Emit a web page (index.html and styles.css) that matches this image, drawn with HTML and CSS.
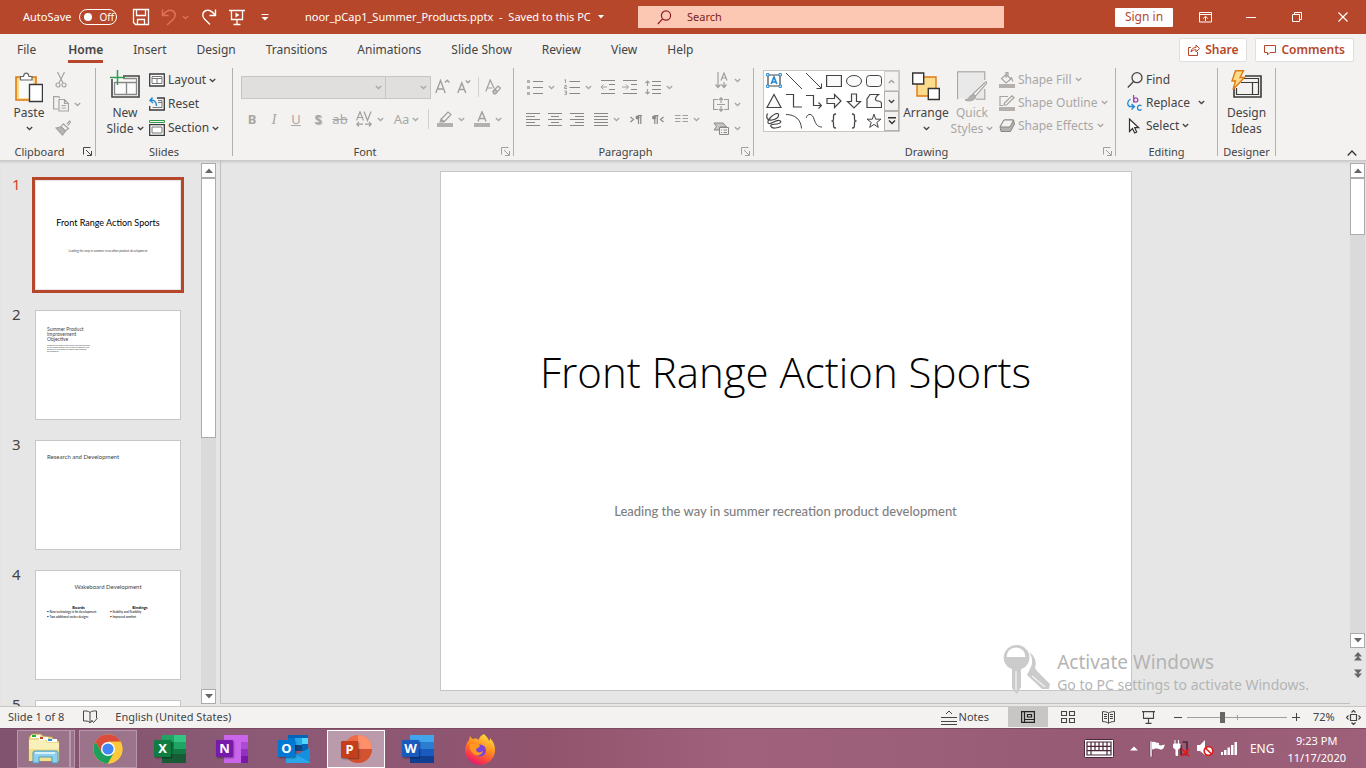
FILE: index.html
```html
<!DOCTYPE html>
<html lang="en">
<head>
  <meta charset="UTF-8">
  <title>noor_pCap1_Summer_Products.pptx</title>
  <link rel="stylesheet" href="styles.css">
</head>
<body>

  <!-- shared shapes -->
  <svg class="defs" width="0" height="0">
    <symbol id="chev" viewBox="0 0 7 5"><path d="M.8 1l2.700 2.500L6.200 1" fill="none" stroke="currentColor" stroke-width="1.300"/></symbol>
    <symbol id="launch" viewBox="0 0 9 9"><path d="M.5 7.500v-7h7M3 3l5 5M8.500 4v4.500H4" fill="none" stroke="currentColor"/></symbol>
    <symbol id="up" viewBox="0 0 8 5"><path d="M0 5l4-4.500L8 5z" fill="#666"/></symbol>
    <symbol id="down" viewBox="0 0 8 5"><path d="M0 0h8L4 4.500z" fill="#666"/></symbol>
  </svg>

  <!-- title bar -->
  <header class="titlebar">
    <div class="quick">
      <label class="autosave">AutoSave
        <span class="toggle"><input type="checkbox"><span>Off</span></span>
      </label>
      <button class="qbtn" aria-label="Save"><svg width="18" height="18" viewBox="0 0 18 18" fill="none" stroke="#fff" stroke-width="1.300"><path d="M1.500 1.500h15v15H3.500l-2-2zM4.500 1.500v6h9v-6M5.500 16.500v-5h7v5"/></svg></button>
      <button class="qbtn undo" aria-label="Undo"><svg width="16" height="18" viewBox="0 0 16 18" fill="none" stroke="#e0705a" stroke-width="1.600"><path d="M1.500 1.500v6h6M2 7C5 3 8 1.500 11 2.500c4 1.500 4 6 1.500 8.500L6 17"/></svg><svg class="chev" width="7" height="5"><use href="#chev"/></svg></button>
      <button class="qbtn" aria-label="Redo"><svg width="16" height="18" viewBox="0 0 16 18" fill="none" stroke="#fff" stroke-width="1.400"><path d="M14.500 1.500v6h-6M14 7C11 3 8 1.500 5 2.500 1 4 1 8.500 3.500 11L9 16.500"/></svg></button>
      <button class="qbtn" aria-label="Start slide show"><svg width="16" height="17" viewBox="0 0 16 17" fill="none" stroke="#fff" stroke-width="1.300"><path d="M0 1.500h16M2.500 1.500v9h11v-9M8 10.500v5M4.500 15.500h7"/><path d="M6.500 3.500l4 2.500-4 2.500z" fill="#fff" stroke="none"/></svg></button>
      <button class="qbtn" aria-label="Customize"><svg width="8" height="8" viewBox="0 0 8 8"><path d="M.5 1.500h7" stroke="#fff"/><path d="M.5 4h7L4 7.500z" fill="#fff"/></svg></button>
    </div>
    <button class="filename">noor_pCap1_Summer_Products.pptx&nbsp; -&nbsp; Saved to this PC <svg width="6" height="4" viewBox="0 0 6 4"><path d="M0 0h6L3 3.500z" fill="#fff"/></svg></button>
    <label class="search">
      <svg width="15" height="15" viewBox="0 0 15 15" fill="none" stroke="#8a2027" stroke-width="1.200"><circle cx="9" cy="5.500" r="4.600"/><path d="M5.600 8.800L.8 14"/></svg>
      <input type="text" placeholder="Search" aria-label="Search">
    </label>
    <div class="window">
      <button class="signin">Sign in</button>
      <button class="wbtn" aria-label="Ribbon display options"><svg width="13" height="11" viewBox="0 0 13 11" fill="none" stroke="#fff"><path d="M.5.5h12v9.500H.5zM.5 2.500h12M6.500 9V4.500M4.200 6.500l2.300-2.200 2.300 2.200"/></svg></button>
      <button class="wbtn" aria-label="Minimize"><svg width="10" height="10" viewBox="0 0 10 10"><path d="M0 5.500h10" stroke="#fff"/></svg></button>
      <button class="wbtn" aria-label="Restore"><svg width="10" height="10" viewBox="0 0 10 10" fill="none" stroke="#fff"><path d="M.5 2.500h7v7h-7zM2.500 2.500v-2h7v7h-2"/></svg></button>
      <button class="wbtn" aria-label="Close"><svg width="10" height="10" viewBox="0 0 10 10"><path d="M.5.5l9 9M9.500.5l-9 9" stroke="#fff" stroke-width="1.200"/></svg></button>
    </div>
  </header>

  <!-- ribbon tabs -->
  <nav class="tabs">
    <a href="#" class="file">File</a>
    <a href="#" class="active">Home</a>
    <a href="#">Insert</a>
    <a href="#">Design</a>
    <a href="#">Transitions</a>
    <a href="#">Animations</a>
    <a href="#">Slide Show</a>
    <a href="#">Review</a>
    <a href="#">View</a>
    <a href="#">Help</a>
    <div class="tabs-right">
      <button class="pill"><svg width="12" height="12" viewBox="0 0 12 12" fill="none" stroke="#b7472a"><path d="M3 3.500H.5v8h9V8M3 8c.3-3 2-4.500 5-4.500V1l3.500 3.500L8 8V5.700C6 5.700 4.300 6.300 3 8z"/></svg>Share</button>
      <button class="pill"><svg width="12" height="12" viewBox="0 0 12 12" fill="none" stroke="#b7472a"><path d="M.5 1.500h11v7H6L3.500 11V8.500h-3z"/></svg>Comments</button>
    </div>
  </nav>

  <!-- ribbon -->
  <section class="ribbon">

    <div class="group clipboard">
      <div class="group-body">
        <button class="big"><svg width="28" height="33" viewBox="0 -2 28 33"><path d="M1 5h20v23H1z" fill="#fbdb8c" stroke="#e07a10" stroke-width="1.600"/><path d="M4 8h14v18H4z" fill="#fafafa"/><path d="M5.500 8V4.500h3c.5-4.500 5-4.500 5.500 0h3V8z" fill="#fff" stroke="#666" stroke-width="1.200"/><path d="M14.500 12.500h13v17h-13z" fill="#fff" stroke="#3a3a3a" stroke-width="1.400"/></svg><span>Paste</span><svg class="chev" width="7" height="5"><use href="#chev"/></svg></button>
        <div class="rows off">
          <button class="tool" aria-label="Cut"><svg width="12" height="16" viewBox="0 0 12 16" fill="none" stroke="#a6a4a2" stroke-width="1.200"><path d="M2.500 0l5.500 11M9.500 0L4 11"/><circle cx="3" cy="13" r="2"/><circle cx="9" cy="13" r="2"/></svg></button>
          <button class="tool drop" aria-label="Copy"><svg width="16" height="16" viewBox="0 0 16 16" fill="none" stroke="#a6a4a2" stroke-width="1.200"><path d="M5 13H.6V.6h5L7 2M6 3.500h5.500l4 4V15H6zM11.500 3.500v4h4M8.500 9.500h4.500M8.500 12h4.500"/></svg><svg class="chev" width="7" height="5"><use href="#chev"/></svg></button>
          <button class="tool" aria-label="Format painter"><svg width="16" height="16" viewBox="0 0 16 16" fill="none" stroke="#a6a4a2" stroke-width="1.200"><path d="M12 4l2.500-3 1.200 1L13 5.500"/><path d="M8 3.500l6 5.500M8 4L6 7l4.500 4L13 8.500" fill="#f3f2f1"/><path d="M1 8l5-1 4.500 4-3 4z" fill="#b8b6b4"/></svg></button>
        </div>
      </div>
      <div class="group-label">Clipboard</div>
      <button class="launch" aria-label="Clipboard options"><svg width="9" height="9"><use href="#launch"/></svg></button>
    </div>

    <div class="group slides">
      <div class="group-body">
        <button class="big"><svg width="30" height="33" viewBox="0 0 30 33" fill="none" stroke="#444"><path d="M2 9v18h27V6H13" fill="#fafafa" stroke-width="1.600"/><path d="M4.500 12v12.500h22V8.500H13M4.500 12.500h22M16.500 12.500v12" stroke="#8a8886" stroke-width="1.300"/><path d="M7.500 0v15M0 7.500h15" stroke="#2e9e4b" stroke-width="1.500"/></svg><span>New</span><span>Slide <svg class="chev" width="7" height="5"><use href="#chev"/></svg></span></button>
        <div class="rows">
          <button class="line"><svg width="16" height="14" viewBox="0 0 16 14" fill="none" stroke="#3a3a3a"><path d="M.7 1h14.600v12H.7z" fill="#fff" stroke-width="1.300"/><path d="M3 3.500h10v7H3zM3 5.500h10M8 5.500v5" stroke="#777"/></svg>Layout <svg class="chev" width="7" height="5"><use href="#chev"/></svg></button>
          <button class="line"><svg width="16" height="14" viewBox="0 0 16 14" fill="none" stroke="#3a3a3a"><path d="M8 1h7.300v12H.7V9" stroke-width="1.300"/><path d="M9 3.500h4v7H3.500M9 5.500h4" stroke="#777"/><path d="M3.500.5L1 3.500l3 2.500M1 3.500c4-.8 6.500.8 6.500 5.500" stroke="#1e88d2" stroke-width="1.400"/></svg>Reset</button>
          <button class="line"><svg width="16" height="16" viewBox="0 0 16 16" fill="none" stroke="#3a3a3a"><path d="M.5.5h15v2H.5z" stroke="#2e9e4b"/><path d="M.7 4.700h14.600v10.600H.7z" fill="#fff" stroke-width="1.300"/><path d="M3 7h10v6H3z" stroke="#777"/></svg>Section <svg class="chev" width="7" height="5"><use href="#chev"/></svg></button>
        </div>
      </div>
      <div class="group-label">Slides</div>
    </div>

    <div class="group font">
      <div class="group-body stack off">
        <div class="toolrow">
          <div class="combos">
            <span class="combo wide"><select disabled aria-label="Font"><option></option></select><svg class="chev" width="7" height="5"><use href="#chev"/></svg></span>
            <span class="combo"><select disabled aria-label="Font size"><option></option></select><svg class="chev" width="7" height="5"><use href="#chev"/></svg></span>
          </div>
          <button class="tool" aria-label="Grow font"><svg width="15" height="16" viewBox="0 0 15 16" fill="none" stroke="#a19f9d" stroke-width="1.400"><path d="M.8 14L5.500 1.500 10.200 14M2.500 10h6M10 3.500l2.200-2.200 2.200 2.200"/></svg></button>
          <button class="tool" aria-label="Shrink font"><svg width="14" height="16" viewBox="0 0 14 16" fill="none" stroke="#a19f9d" stroke-width="1.400"><path d="M.8 14l4-10 4 10M2.300 10.500h5M8.800 1.500L11 3.700l2.200-2.200"/></svg></button>
          <i class="sep"></i>
          <button class="tool" aria-label="Clear formatting"><svg width="16" height="16" viewBox="0 0 16 16" fill="none" stroke="#a19f9d" stroke-width="1.200"><path d="M.8 12.500L5.200 1l4 8.500M2.300 9h5M8 12.500L13 7l2.500 2.200-5 5.500H9z"/><path d="M8 12.500l2-2.200 2.500 2.200-2 2.200H9z" fill="#c8c6c4"/></svg></button>
        </div>
        <div class="toolrow">
          <button class="tool"><b>B</b></button>
          <button class="tool serif"><i>I</i></button>
          <button class="tool"><u>U</u></button>
          <button class="tool shadow"><b>S</b></button>
          <button class="tool"><s>ab</s></button>
          <button class="tool drop" aria-label="Character spacing"><svg width="16" height="16" viewBox="0 0 16 16" fill="none" stroke="#a19f9d" stroke-width="1.200"><path d="M.5 9.500L4 .8l3.500 8.700M1.800 6.500h4.500M8 .5l3.500 9 3.500-9M3 11L.8 13.200 3 15.500M.8 13.200H7M13 11l2.200 2.200L13 15.500M15.200 13.200H9"/></svg><svg class="chev" width="7" height="5"><use href="#chev"/></svg></button>
          <button class="tool drop case">Aa<svg class="chev" width="7" height="5"><use href="#chev"/></svg></button>
          <i class="sep"></i>
          <button class="tool drop" aria-label="Highlight"><svg width="16" height="16" viewBox="0 0 16 16" fill="none" stroke="#a19f9d" stroke-width="1.200"><path d="M4 8.500L11 1l3 2.500-6.500 7zM4 8.500L3 11h3z"/><path d="M0 12h16v4H0z" fill="#b3b0ad" stroke="none"/></svg><svg class="chev" width="7" height="5"><use href="#chev"/></svg></button>
          <button class="tool drop" aria-label="Font color"><svg width="16" height="16" viewBox="0 0 16 16" fill="none" stroke="#a19f9d" stroke-width="1.400"><path d="M4 10.500L8 .8l4 9.700M5.300 7.500h5.400"/><path d="M0 12h16v4H0z" fill="#b3b0ad" stroke="none"/></svg><svg class="chev" width="7" height="5"><use href="#chev"/></svg></button>
        </div>
      </div>
      <div class="group-label">Font</div>
      <button class="launch dim" aria-label="Font options"><svg width="9" height="9"><use href="#launch"/></svg></button>
    </div>

    <div class="group paragraph">
      <div class="group-body off">
        <div class="stack">
          <div class="toolrow">
            <button class="tool drop" aria-label="Bullets"><svg width="16" height="15" viewBox="0 0 16 15"><path d="M0 0h3v3H0zM0 6h3v3H0zM0 12h3v3H0z" fill="#b3b0ad"/><path d="M6 1.500h10M6 7.500h10M6 13.500h10" stroke="#8a8886"/></svg><svg class="chev" width="7" height="5"><use href="#chev"/></svg></button>
            <button class="tool drop" aria-label="Numbering"><svg width="16" height="16" viewBox="0 0 16 16" fill="none" stroke="#a19f9d"><path d="M.5 1l1-.5v3.500M.5 6.500h2v1.500h-2v1.500H3M.5 12h2v3.500h-2M1 13.700h1.500"/><path d="M5.500 2.500h10.500M5.500 8.500h10.500M5.500 14.500h10.500" stroke="#8a8886"/></svg><svg class="chev" width="7" height="5"><use href="#chev"/></svg></button>
            <button class="tool" aria-label="Decrease indent"><svg width="15" height="14" viewBox="0 0 15 14" fill="none" stroke="#8a8886"><path d="M1 .5h14M9 4.500h6M9 9.500h6M1 13.500h14"/><path d="M7 7H1M3.500 4.500L1 7l2.500 2.500" stroke="#a19f9d"/></svg></button>
            <button class="tool" aria-label="Increase indent"><svg width="15" height="14" viewBox="0 0 15 14" fill="none" stroke="#8a8886"><path d="M1 .5h14M9 4.500h6M9 9.500h6M1 13.500h14"/><path d="M0 7h6M4 4.500L6.500 7 4 9.500" stroke="#a19f9d"/></svg></button>
            <button class="tool drop" aria-label="Line spacing"><svg width="16" height="15" viewBox="0 0 16 15" fill="none" stroke="#8a8886"><path d="M7 1.500h9M7 5.500h9M7 9.500h9M7 13.500h9"/><path d="M2.500 1v5M.5 3l2-2 2 2M2.500 9v5M.5 12l2 2 2-2" stroke="#a19f9d" stroke-width="1.200"/></svg><svg class="chev" width="7" height="5"><use href="#chev"/></svg></button>
          </div>
          <div class="toolrow">
            <button class="tool" aria-label="Align left"><svg width="14" height="13" viewBox="0 0 14 13"><path d="M0 .5h14M0 3.500h9M0 6.500h14M0 9.500h9M0 12.500h14" stroke="#8a8886"/></svg></button>
            <button class="tool" aria-label="Center"><svg width="14" height="13" viewBox="0 0 14 13"><path d="M0 .5h14M3 3.500h8M0 6.500h14M3 9.500h8M0 12.500h14" stroke="#8a8886"/></svg></button>
            <button class="tool" aria-label="Align right"><svg width="14" height="13" viewBox="0 0 14 13"><path d="M0 .5h14M5 3.500h9M0 6.500h14M5 9.500h9M0 12.500h14" stroke="#8a8886"/></svg></button>
            <button class="tool drop" aria-label="Justify"><svg width="14" height="13" viewBox="0 0 14 13"><path d="M0 .5h14M0 3.500h14M0 6.500h14M0 9.500h14M0 12.500h14" stroke="#8a8886"/></svg><svg class="chev" width="7" height="5"><use href="#chev"/></svg></button>
            <button class="tool" aria-label="Left to right"><svg width="12" height="9" viewBox="0 0 12 9" fill="none" stroke="#8a8886" stroke-width="1.200"><path d="M.5 2l3 2.500L.5 7M8.500 9V.6M10.800 9V.6M12 .6H8"/><circle cx="7.500" cy="2.600" r="2" fill="#8a8886" stroke="none"/></svg></button>
            <button class="tool" aria-label="Right to left"><svg width="12" height="9" viewBox="0 0 12 9" fill="none" stroke="#8a8886" stroke-width="1.200"><path d="M11.500 2l-3 2.500 3 2.500M2.800 9V.6M5.200 9V.6M6.500.6H2.500"/><circle cx="2" cy="2.600" r="2" fill="#8a8886" stroke="none"/></svg></button>
            <button class="tool drop" aria-label="Columns"><svg width="13" height="8" viewBox="0 0 13 8"><path d="M0 .5h5.500M0 3.500h5.500M0 6.500h5.500M7.500.5H13M7.500 3.500H13M7.500 6.500H13" stroke="#a19f9d"/></svg><svg class="chev" width="7" height="5"><use href="#chev"/></svg></button>
          </div>
        </div>
        <div class="rows">
          <button class="tool drop" aria-label="Text direction"><svg width="16" height="17" viewBox="0 0 16 17" fill="none" stroke="#a19f9d" stroke-width="1.200"><path d="M5 0v15M2.500 12.500L5 15.500l2.500-3M11 10v5M8.500 12.500l2.500 3 2.500-3M8 8.500L11 1l3 7.500M9 6h4"/></svg><svg class="chev" width="7" height="5"><use href="#chev"/></svg></button>
          <button class="tool drop" aria-label="Align text"><svg width="16" height="15" viewBox="0 0 16 15" fill="none" stroke="#a19f9d" stroke-width="1.200"><path d="M5 2.500H.6v10H5M11 2.500h4.400v10H11M4 7.500h8M8 6V1M6 3l2-2.200L10 3M8 9v5M6 12l2 2.200 2-2.200"/></svg><svg class="chev" width="7" height="5"><use href="#chev"/></svg></button>
          <button class="tool drop" aria-label="SmartArt"><svg width="16" height="13" viewBox="0 0 16 13" fill="none" stroke="#8a8886"><path d="M1 1h9l3.500 4H7v3H1l2.500-3.500z" fill="#c8c6c4"/><path d="M6.500 5.500h9v7h-9zM8 8h1M10.500 8h3.500M8 10.500h1M10.500 10.500h3.500" fill="#f3f2f1"/></svg><svg class="chev" width="7" height="5"><use href="#chev"/></svg></button>
        </div>
      </div>
      <div class="group-label">Paragraph</div>
      <button class="launch dim" aria-label="Paragraph options"><svg width="9" height="9"><use href="#launch"/></svg></button>
    </div>

    <div class="group drawing">
      <div class="group-body">
        <div class="gallery">
          <div class="shapes">
            <button aria-label="Text box"><svg width="16" height="16" viewBox="0 0 16 16" fill="none" stroke="#444"><path d="M2 2h12v11H2z" fill="#fff" stroke-width="1.200"/><path d="M.6.600h2.300v2.300H.6zM13.100.600h2.300v2.300h-2.300zM.6 12.100h2.300v2.300H.6zM13.100 12.100h2.300v2.300h-2.300z" stroke="#1e88d2" fill="#fff"/><path d="M5.200 11L8 4l2.800 7M6.200 9h3.600" stroke="#1e88d2" stroke-width="1.600"/></svg></button>
            <button aria-label="Line"><svg width="16" height="16" viewBox="0 0 16 16"><path d="M0 0l16 16" stroke="#444"/></svg></button>
            <button aria-label="Arrow"><svg width="16" height="16" viewBox="0 0 16 16" fill="none" stroke="#444"><path d="M0 0l15 15M15.500 10.500v5h-5"/></svg></button>
            <button aria-label="Rectangle"><svg width="16" height="16" viewBox="0 0 16 16" fill="#fafafa" stroke="#444"><path d="M.6 2.500h14.800v11H.6z" stroke-width="1.200"/></svg></button>
            <button aria-label="Oval"><svg width="16" height="16" viewBox="0 0 16 16" fill="#fafafa" stroke="#444"><ellipse cx="8" cy="8" rx="7.500" ry="5.500"/></svg></button>
            <button aria-label="Rounded rectangle"><svg width="16" height="16" viewBox="0 0 16 16" fill="#fafafa" stroke="#444"><rect x=".5" y="2.500" width="15" height="11" rx="3"/></svg></button>
            <button aria-label="Triangle"><svg width="16" height="16" viewBox="0 0 16 16" fill="#fafafa" stroke="#444"><path d="M8 1.500l7 13H1z" stroke-width="1.200"/></svg></button>
            <button aria-label="Elbow"><svg width="16" height="16" viewBox="0 0 16 16" fill="none" stroke="#444"><path d="M0 1.500h7.500v12.500H16" stroke-width="1.200"/></svg></button>
            <button aria-label="Elbow arrow"><svg width="16" height="16" viewBox="0 0 16 16" fill="none" stroke="#444"><path d="M0 2.500h7.500v10H15M12.500 9.500l3 3-3 3" stroke-width="1.200"/></svg></button>
            <button aria-label="Right arrow"><svg width="16" height="16" viewBox="0 0 16 16" fill="#fafafa" stroke="#444"><path d="M1 5.500h7.500v-4L15 8l-6.500 6.500v-4H1z" stroke-width="1.200"/></svg></button>
            <button aria-label="Down arrow"><svg width="16" height="16" viewBox="0 0 16 16" fill="#fafafa" stroke="#444"><path d="M5.500 1v7.500h-4L8 15l6.500-6.500h-4V1z" stroke-width="1.200"/></svg></button>
            <button aria-label="Freeform"><svg width="16" height="16" viewBox="0 0 16 16" fill="#fafafa" stroke="#444"><path d="M4 1.500h8.500c-4 3-4 6.500-.5 6.500 2.500 0 3.500.5 3.500 3v3.500H1V6z" stroke-width="1.200"/></svg></button>
            <button aria-label="Scribble"><svg width="16" height="16" viewBox="0 0 16 16" fill="none" stroke="#444"><path d="M1.500.5C-.5 5 2 8 6 7s7-3 6.500-5.500S7 1.500 4 5s-2.500 6 0 5.500S10 7 13 7.500s2 3-2 3.500-7 0-6 2.500 7 1.500 10 0" stroke-width="1.200"/></svg></button>
            <button aria-label="Arc"><svg width="16" height="16" viewBox="0 0 16 16" fill="none" stroke="#444"><path d="M0 1.500c9 0 15 5 15.500 14"/></svg></button>
            <button aria-label="Curve"><svg width="16" height="16" viewBox="0 0 16 16" fill="none" stroke="#444"><path d="M0 5c2-5 6-5 8 1s4 8 8 8"/></svg></button>
            <button aria-label="Left brace"><svg width="16" height="16" viewBox="0 0 16 16" fill="none" stroke="#444" stroke-width="1.300"><path d="M10 1C7.500 1 7.500 2 7.500 5S7 8 5.500 8C7 8 7.500 8 7.500 11s0 4 2.500 4"/></svg></button>
            <button aria-label="Right brace"><svg width="16" height="16" viewBox="0 0 16 16" fill="none" stroke="#444" stroke-width="1.300"><path d="M6 1c2.500 0 2.500 1 2.500 4S9 8 10.500 8C9 8 8.500 8 8.500 11s0 4-2.500 4"/></svg></button>
            <button aria-label="Star"><svg width="16" height="16" viewBox="0 0 16 16" fill="#fafafa" stroke="#444"><path d="M8 1.200l1.700 5h5.300l-4.200 3.200 1.500 5L8 11.400l-4.300 3 1.500-5L1 6.200h5.300z"/></svg></button>
          </div>
          <div class="scroller">
            <button class="dim" aria-label="Scroll up"><svg width="7" height="5" viewBox="0 0 7 5"><path d="M.8 4l2.700-2.500L6.200 4" fill="none" stroke="#a19f9d" stroke-width="1.300"/></svg></button>
            <button aria-label="Scroll down"><svg width="7" height="5"><use href="#chev"/></svg></button>
            <button aria-label="More shapes"><svg width="8" height="8" viewBox="0 0 8 8" fill="none" stroke="#333"><path d="M0 .8h8M1 3.500l3 3 3-3" stroke-width="1.400"/></svg></button>
          </div>
        </div>
        <button class="big arrange"><svg width="28" height="33" viewBox="0 -2 28 33"><path d="M5 5h19v19H5z" fill="#fbdb8c" stroke="#e07a10" stroke-width="1.400"/><path d="M.7 1h11v11H.7zM16.300 16.500h11v11h-11z" fill="#fff" stroke="#333" stroke-width="1.400"/></svg><span>Arrange</span><svg class="chev" width="7" height="5"><use href="#chev"/></svg></button>
        <button class="big quickstyles off"><svg width="30" height="33" viewBox="0 -1 30 33" fill="#e9e9ea" stroke="#a6a4a2"><path d="M.7 28V1h27v8M27.700 18v10h-9" stroke-width="1.300"/><path d="M1.200 1.500h26v26h-26z" stroke="none"/><path d="M16 23L28.500 11c1.500-.5 1.500.5 1 1.500L18.500 25z" fill="#fff" stroke-width="1.200"/><path d="M8 29c4 0 4-5 8-5.500 3 .5 3 3 1.500 4.500-2 2-6 2.500-9.500 1z" fill="#b3b0ad"/></svg><span>Quick</span><span>Styles <svg class="chev" width="7" height="5"><use href="#chev"/></svg></span></button>
        <div class="rows tight off">
          <button class="line"><svg width="16" height="16" viewBox="0 0 16 16" fill="none" stroke="#a6a4a2" stroke-width="1.200"><path d="M7 2.500l5 4.500-5 4-4.500-4.500zM7 6V.6h2V4M12 5l2 4.500"/><path d="M0 12h16v4H0z" fill="#b3b0ad" stroke="none"/></svg>Shape Fill <svg class="chev" width="7" height="5"><use href="#chev"/></svg></button>
          <button class="line"><svg width="16" height="16" viewBox="0 0 16 16" fill="none" stroke="#a6a4a2" stroke-width="1.200"><path d="M9 1.500H1v9h3M5.500 8L13 .8l2 2L7.500 10H5z"/><path d="M0 12h16v4H0z" fill="#b3b0ad" stroke="none"/></svg>Shape Outline <svg class="chev" width="7" height="5"><use href="#chev"/></svg></button>
          <button class="line"><svg width="16" height="14" viewBox="0 0 16 14" fill="#b3b0ad" stroke="#8a8886"><path d="M1 8l4-7h9.500l1 4-4 7.500H2z"/><path d="M5 1h9.500l-3.500 7H1z" fill="#f3f2f1"/></svg>Shape Effects <svg class="chev" width="7" height="5"><use href="#chev"/></svg></button>
        </div>
      </div>
      <div class="group-label">Drawing</div>
      <button class="launch dim" aria-label="Drawing options"><svg width="9" height="9"><use href="#launch"/></svg></button>
    </div>

    <div class="group editing">
      <div class="group-body">
        <div class="rows tight">
          <button class="line"><svg width="16" height="16" viewBox="0 0 16 16" fill="none" stroke="#444" stroke-width="1.300"><circle cx="10" cy="5.700" r="5"/><path d="M6.500 9.500L.8 15.500"/></svg>Find</button>
          <button class="line replace"><svg width="16" height="16" viewBox="0 0 16 16" fill="none" stroke-width="1.300"><path d="M6.600 0v7.500" stroke="#a347b5"/><circle cx="8.700" cy="5" r="2.100" stroke="#a347b5"/><path d="M14.500 10.700c-2.500-1.200-4 0-4 2s1.500 3.200 4 2" stroke="#1e88d2"/><path d="M3.500 4C0 6 0 10 2.500 11.500H7M4.500 9L7.500 11.500l-3 3" stroke="#1e88d2"/></svg>Replace <svg class="chev" width="7" height="5"><use href="#chev"/></svg></button>
          <button class="line"><svg width="16" height="16" viewBox="0 0 16 16" fill="#fff" stroke="#333" stroke-width="1.200"><path d="M2.500 1v12.500l3-3 2.200 4.500 2-1-2-4.300h4z"/></svg>Select <svg class="chev" width="7" height="5"><use href="#chev"/></svg></button>
        </div>
      </div>
      <div class="group-label">Editing</div>
    </div>

    <div class="group designer">
      <div class="group-body">
        <button class="big"><svg width="31" height="33" viewBox="0 0 31 33" fill="none" stroke="#3a3a3a"><path d="M3 18v9h27V6H14" stroke-width="1.600"/><path d="M5.500 18v6.500h22V8.500H13M10 12.500h17.500M21.500 12.500v12" stroke-width="1.200"/><path d="M4.500.8h8L9 7.500h4.500L2 19.500l2.500-8.500H1z" fill="#fbdb8c" stroke="#e07a10" stroke-width="1.400"/></svg><span>Design</span><span>Ideas</span></button>
      </div>
      <div class="group-label">Designer</div>
    </div>

    <button class="collapse" aria-label="Collapse ribbon"><svg width="10" height="6" viewBox="0 0 10 6"><path d="M.7 5.500L5 1l4.300 4.500" fill="none" stroke="#333" stroke-width="1.300"/></svg></button>
  </section>

  <!-- work area -->
  <main class="work">
    <ol class="thumbs">
      <li class="selected"><span class="num">1</span>
        <div class="thumb cover"><h3>Front Range Action Sports</h3><p>Leading the way in summer recreation product development</p></div></li>
      <li><span class="num">2</span>
        <div class="thumb objective"><h3>Summer Product Improvement Objective</h3><p>Complete to improve the safety and performance of our action sports line to excite customers and partners in the action to action sport product development</p></div></li>
      <li><span class="num">3</span>
        <div class="thumb"><h3>Research and Development</h3></div></li>
      <li><span class="num">4</span>
        <div class="thumb compare"><h3>Wakeboard Development</h3>
          <div class="cols">
            <div><h4>Boards</h4><ul><li>New technology in fin development</li><li>Two additional rocker designs</li></ul></div>
            <div><h4>Bindings</h4><ul><li>Stability and flexibility</li><li>Improved comfort</li></ul></div>
          </div></div></li>
      <li><span class="num">5</span><div class="thumb"></div></li>
    </ol>
    <div class="scrollbar side">
      <button aria-label="Up"><svg width="8" height="5"><use href="#up"/></svg></button>
      <div class="track"><div class="handle"></div></div>
      <button aria-label="Down"><svg width="8" height="5"><use href="#down"/></svg></button>
    </div>
    <section class="canvas">
      <article class="slide">
        <h1>Front Range Action Sports</h1>
        <p>Leading the way in summer recreation product development</p>
      </article>
    </section>
    <div class="scrollbar main">
      <button aria-label="Up"><svg width="8" height="5"><use href="#up"/></svg></button>
      <div class="track"><div class="handle"></div></div>
      <button aria-label="Down"><svg width="8" height="5"><use href="#down"/></svg></button>
      <button class="page" aria-label="Previous slide"><svg width="8" height="9" viewBox="0 0 8 9"><path d="M0 4.500L4 0l4 4.500zM0 8.500L4 4l4 4.500z" fill="#666"/></svg></button>
      <button class="page" aria-label="Next slide"><svg width="8" height="9" viewBox="0 0 8 9"><path d="M0 .500h8L4 5zM0 4.500h8L4 9z" fill="#666"/></svg></button>
    </div>
    <div class="watermark">
      <svg width="48" height="50" viewBox="0 0 48 50" fill="#cbcbcb"><path d="M26 7c6 4 8 10 6 16l2 3 13 13-1 5h-7L24 30l3-6c3-5 3-11-1-17z"/><path d="M13 0a12.500 12.500 0 0 1 5 24.300V42l-2 3.500L14 49l-3-3-2-3V24.300A12.500 12.500 0 0 1 13 0z"/><path d="M3.500 12a9.500 9.500 0 0 1 19 0z" fill="#fff"/><path d="M13 26v19M29 31l13 11" stroke="#f2f2f2" stroke-width="1.300"/></svg>
      <div class="watermark-text"><strong>Activate Windows</strong><span>Go to PC settings to activate Windows.</span></div>
    </div>
  </main>

  <!-- status bar -->
  <footer class="status">
    <span class="count">Slide 1 of 8</span>
    <button class="spell" aria-label="Spelling"><svg width="15" height="14" viewBox="0 0 15 14" fill="none" stroke="#444"><path d="M7 2.500C5.500 1 3 .8.500 1v10c2.500-.2 5 0 6.500 1.800V2.500C8.500 1 10.500.8 13.500 1v7M7 12.500L9.500 11M8.500 10l2 2.500 4-4.500"/></svg></button>
    <span class="lang">English (United States)</span>
    <button class="notes"><svg width="16" height="15" viewBox="0 0 16 15" fill="none" stroke="#444"><path d="M0 7.500h16M0 11.500h16M0 14.500h16M5 4l3-3 3 3"/></svg>Notes</button>
    <div class="views">
      <button class="active" aria-label="Normal"><svg width="14" height="12" viewBox="0 0 14 12" fill="none" stroke="#222" stroke-width="1.200"><path d="M.6.6h12.800v10.800H.6zM3.500.6v10.800M3.500 8.500h10M6.500 3.500h4v2.500h-4z"/></svg></button>
      <button aria-label="Slide sorter"><svg width="14" height="12" viewBox="0 0 14 12" fill="none" stroke="#444" stroke-width="1.100"><path d="M.5.5h5v4h-5zM8.500.5h5v4h-5zM.5 7.500h5v4h-5zM8.500 7.500h5v4h-5z"/></svg></button>
      <button aria-label="Reading view"><svg width="13" height="13" viewBox="0 0 13 13" fill="none" stroke="#444"><path d="M6.500 2C5 1 3 .6.500.6v10c2.500 0 4.500.4 6 1.800 1.500-1.400 3.500-1.800 6-1.800V.6C10 .6 8 1 6.500 2zM6.500 2v10M2 3.500h3M2 5.500h3M2 7.500h3M8 3.500h3M8 5.500h3M8 7.500h3"/></svg></button>
      <button aria-label="Slide show"><svg width="13" height="13" viewBox="0 0 13 13" fill="none" stroke="#444" stroke-width="1.100"><path d="M0 .6h13M1.500.6v6.800h10V.6M6.500 7.500v4.500M3.500 12.400h6"/></svg></button>
    </div>
    <button class="zoom" aria-label="Zoom out"><svg width="8" height="8" viewBox="0 0 8 8"><path d="M0 4.500h8" stroke="#444"/></svg></button>
    <input class="slider" type="range" min="0" max="100" value="35" aria-label="Zoom">
    <button class="zoom" aria-label="Zoom in"><svg width="8" height="8" viewBox="0 0 8 8"><path d="M0 4.500h8M4.500 0v8" stroke="#444"/></svg></button>
    <span class="percent">72%</span>
    <button class="fit" aria-label="Fit slide"><svg width="15" height="15" viewBox="0 0 15 15" fill="none" stroke="#444" stroke-width="1.200"><path d="M4.500 4.500h6v6h-6zM5.500 2.500l2-2 2 2M5.500 12.500l2 2 2-2M2.500 5.500l-2 2 2 2M12.500 5.500l2 2-2 2"/></svg></button>
  </footer>

  <!-- taskbar -->
  <div class="taskbar">
    <button class="app open stacked" aria-label="File Explorer"><svg width="34" height="32" viewBox="0 0 34 32"><path d="M2 4l3-3h9l2 2 9 1 2 3 5 1v20H2z" fill="#ead78a" stroke="#b59a45" stroke-width=".6"/><path d="M4 2h9v3H4zM12 4h9v3h-9zM20 6h10v3H20z" fill="#fff"/><path d="M5 2h4v2H5z" fill="#1fae3c"/><path d="M13 4h3v2h-3z" fill="#c8402a"/><path d="M21 6h4v2h-4z" fill="#2a8fdc"/><path d="M2 7h16l2 3h12v18H2z" fill="#f3e08c"/><path d="M2 7h16l2 3h12v6H2z" fill="#f9efb8"/><path d="M6 30V20c0-2 1-2 3-2h18c3 0 4 0 4 2v10h-6v-6H12v6z" fill="#8fd0ea" stroke="#4a9cc4"/><path d="M8 20h20" stroke="#d6f1fb" stroke-width="2"/></svg></button>
    <button class="app open" aria-label="Chrome"><svg width="30" height="30" viewBox="0 0 30 30"><circle cx="15" cy="15" r="14.500" fill="#fdc93a"/><path d="M2.400 7.800A14.500 14.500 0 0 1 27.600 7.800H15l-6.200 10.800z" fill="#dd4b3a"/><path d="M2.400 7.800A14.500 14.500 0 0 0 15 29.500l6.200-10.900H8.800z" fill="#1a9f5c"/><path d="M15 7.800h12.600A14.500 14.500 0 0 1 15 29.500l6.200-10.900z" fill="#fdc93a"/><circle cx="15" cy="15" r="7" fill="#fff"/><circle cx="15" cy="15" r="5.600" fill="#4285f4"/></svg></button>
    <button class="app office excel" aria-label="Excel"><svg width="32" height="28" viewBox="0 0 32 28"><path d="M8 0h12v9H8z" fill="#21a366"/><path d="M20 0h12v7H20z" fill="#33c481"/><path d="M20 7h12v7H20z" fill="#21a366"/><path d="M8 7h12v14H8z" fill="#107c41"/><path d="M20 14h12v7H20z" fill="#107c41"/><path d="M8 19h24v9H8z" fill="#185c37"/></svg><span>X</span></button>
    <button class="app office onenote" aria-label="OneNote"><svg width="32" height="28" viewBox="0 0 32 28"><path d="M8 0h24v28H8z" fill="#ca64ea"/><path d="M25 7h7v7h-7z" fill="#ae4bd5"/><path d="M25 14h7v7h-7z" fill="#9332bf"/><path d="M25 21h7v7h-7z" fill="#7719aa"/></svg><span>N</span></button>
    <button class="app office outlook" aria-label="Outlook"><svg width="32" height="28" viewBox="0 0 32 28"><path d="M10 0h20v16H10z" fill="#0364b8"/><path d="M10 3h7v7h-7z" fill="#0078d4"/><path d="M17 3h7v7h-7z" fill="#28a8ea"/><path d="M24 3h6v6h-6z" fill="#50d9ff"/><path d="M17 10h7v6h-7z" fill="#14447d"/><path d="M8 28V13l12 7 12-7v15z" fill="#28a8ea"/><path d="M32 13v14L18 20z" fill="#1490df"/></svg><span>O</span></button>
    <button class="app office ppt current" aria-label="PowerPoint"><svg width="32" height="28" viewBox="0 0 32 28"><circle cx="18" cy="14" r="14" fill="#ed6c47"/><path d="M18 0a14 14 0 0 1 14 14H18z" fill="#ff8f6b"/><path d="M32 14a14 14 0 0 1-28 0z" fill="#d35230"/></svg><span>P</span></button>
    <button class="app office word" aria-label="Word"><svg width="32" height="28" viewBox="0 0 32 28"><path d="M8 0h24v7H8z" fill="#41a5ee"/><path d="M8 7h24v7H8z" fill="#2b7cd3"/><path d="M8 14h24v7H8z" fill="#185abd"/><path d="M8 21h24v7H8z" fill="#103f91"/></svg><span>W</span></button>
    <button class="app" aria-label="Firefox"><svg width="32" height="32" viewBox="0 0 32 32"><defs><linearGradient id="fx" x1=".8" y1="0" x2=".3" y2="1"><stop offset="0" stop-color="#ffe644"/><stop offset=".45" stop-color="#ff8a1f"/><stop offset=".8" stop-color="#f9394a"/><stop offset="1" stop-color="#e0157f"/></linearGradient></defs><path d="M20 1c3 3 4 4 5 7 1-1 1-2 1-3 4 4 5 8 5 12a15 15 0 0 1-30 0c0-4 2-8 4-10l1-4c1 1 2 3 3 3 3-1 5 0 6 1 0-3 3-5 5-6z" fill="url(#fx)"/><circle cx="16" cy="17.500" r="6" fill="#7a45d6"/><path d="M6 10c2 2 8 0 10 3-1 2-4 2-4 4 1 3 4 3 7 1-1 4-6 6-9 3-4-3-5-7-4-11z" fill="#ff9820"/></svg></button>

    <div class="tray">
      <svg class="keyboard" width="30" height="19" viewBox="0 0 30 19"><rect x=".5" y=".5" width="29" height="18" rx="1" fill="#fff" stroke="#4b2638"/><path d="M3 3h24v13H3zM3 7.300h24M3 11.700h24M7 3v13M11 3v8.700M15 3v8.700M19 3v8.700M23 3v13" fill="none" stroke="#4b2638" stroke-width="1.200"/></svg>
      <svg width="8" height="5" viewBox="0 0 8 5"><path d="M0 4.500L4 .5l4 4z" fill="#fff"/></svg>
      <svg width="17" height="16" viewBox="0 0 17 16"><path d="M1 0h2v16H1z" fill="#fff" stroke="#4b2638" stroke-width=".5"/><path d="M3 1c3-1 4 1 7 1v2c2 1 4 0 6-.5-1 2-1 4-3 5-2 .5-3-1-5-1s-3 .5-5 1z" fill="#fff"/></svg>
      <svg width="17" height="17" viewBox="0 0 17 17" fill="none"><path d="M9.500 2h4.500v12.500H8V5" stroke="#4b2638" stroke-width="1.600"/><path d="M2 0v4M5.500 0v4M.5 4h6.500v3c0 1.500-1.500 2-2.500 2v6.500h-1.500V9C2 9 .5 8.500.5 7z" fill="#fff" stroke="#fff"/><path d="M9 9l7 7M16 9l-7 7" stroke="#e02020" stroke-width="1.800"/></svg>
      <svg width="17" height="17" viewBox="0 0 17 17"><path d="M0 5h3l5-5v15l-5-4H0z" fill="#fff"/><circle cx="11.500" cy="11" r="4.300" fill="#fff" stroke="#dc2222" stroke-width="1.700"/><path d="M8.500 8l6 6" stroke="#dc2222" stroke-width="1.700"/></svg>
      <svg width="16" height="13" viewBox="0 0 16 13" fill="#fff"><path d="M0 10h2v3H0zM3 8h2.500v5H3zM6.500 5.500H9V13H6.500zM10 3h2.500v10H10zM13.500 0H16v13h-2.500z"/></svg>
      <span class="kb">ENG</span>
      <time>9:23 PM<br>11/17/2020</time>
    </div>
  </div>

</body>
</html>
```
FILE: styles.css
```css
*{
  box-sizing: border-box;
}

body{
  margin: 0;
  height: 100vh;
  display: flex;
  flex-direction: column;
  overflow: hidden;
  background: #e6e6e6;
  color: #444444;
  font-family: "Noto Sans", "Open Sans", sans-serif;
  font-size: 12px;
  line-height: 16px;
}

button,
input,
select{
  font: inherit;
  color: inherit;
  margin: 0;
  padding: 0;
  border: none;
  background: none;
}

svg{
  flex: none;
}

.defs{
  position: absolute;
}

h1, h3, h4, p, ul, ol{
  margin: 0;
  padding: 0;
}

/* title bar */
.titlebar{
  flex: none;
  height: 34px;
  display: flex;
  align-items: center;
  background: #b7472a;
  color: #fff;
}

.quick{
  width: 305px;
  padding-left: 23px;
  display: flex;
  align-items: center;
  font-size: 11px;
}

.autosave{
  display: flex;
  align-items: center;
  gap: 8px;
  margin-right: 10px;
}

.toggle{
  display: flex;
  align-items: center;
  gap: 7px;
  width: 38px;
  height: 16px;
  padding-left: 4px;
  border: 1px solid #fff;
  border-radius: 8px;
  font-size: 10px;
}

.toggle input{
  appearance: none;
  width: 8px;
  height: 8px;
  border-radius: 50%;
  background: #fff;
}

.qbtn{
  display: flex;
  align-items: center;
  justify-content: center;
  width: 28px;
  height: 28px;
}

.undo{
  gap: 5px;
  width: 40px;
  color: #e0705a;
}

.filename{
  width: 333px;
  color: #fff;
  font-size: 11px;
  text-align: left;
  white-space: nowrap;
}

.filename svg{
  margin: 0 0 2px 4px;
}

.search{
  display: flex;
  align-items: center;
  gap: 15px;
  width: 366px;
  height: 22px;
  padding-left: 19px;
  background: #fdc8b3;
  color: #7b1c21;
  font-size: 11px;
}

.search input{
  flex: 1;
  outline: none;
}

.search input::placeholder{
  color: #7b1c21;
}

.window{
  margin-left: auto;
  display: flex;
  align-items: center;
}

.signin{
  width: 58px;
  height: 19px;
  margin-right: 9px;
  background: #fff;
  color: #b7472a;
  border-radius: 1px;
}

.wbtn{
  display: flex;
  align-items: center;
  justify-content: center;
  width: 46px;
  height: 34px;
}

/* tabs */
.tabs{
  flex: none;
  height: 32px;
  padding: 0 12px 0 17px;
  display: flex;
  align-items: center;
  gap: 30px;
  background: #f3f2f1;
}

.tabs a{
  color: #444444;
  text-decoration: none;
  padding: 4px 0 2px;
  border-bottom: 3px solid transparent;
}

.tabs .file{
  margin-right: 2px;
}

.tabs .active{
  font-weight: 600;
  border-bottom-color: #b7472a;
}

.tabs-right{
  margin-left: auto;
  display: flex;
  gap: 8px;
}

.pill{
  display: flex;
  align-items: center;
  gap: 5px;
  height: 24px;
  padding: 0 8px;
  border: 1px solid #e1dfdd;
  border-radius: 2px;
  background: #fff;
  color: #b7472a;
  font-weight: 600;
}

/* ribbon */
.ribbon{
  flex: none;
  height: 94px;
  display: flex;
  padding: 2px 0 4px;
  position: relative;
  background: #f3f2f1;
}

.group{
  position: relative;
  display: flex;
  flex-direction: column;
  border-right: 1px solid #b3b0ad;
}

.group-body{
  flex: 1;
  display: flex;
}

.group-label{
  height: 12px;
  line-height: 12px;
  margin-bottom: -2px;
  text-align: center;
  font-size: 11px;
}

.clipboard{ width: 96px; }
.slides{ width: 137px; }
.font{ width: 281px; }
.paragraph{ width: 240px; }
.drawing{ width: 362px; }
.editing{ width: 102px; }
.designer{ width: 58px; }

.clipboard .group-label,
.font .group-label,
.paragraph .group-label,
.drawing .group-label{
  padding-right: 16px;
}

.off{
  color: #a9a7a5;
}

.big{
  display: flex;
  flex-direction: column;
  align-items: center;
  width: 58px;
  padding-top: 2px;
}

.big > svg:first-child{
  margin-bottom: 2px;
}

.big .chev{
  margin-top: 5px;
}

.big span{
  white-space: nowrap;
}

.big span .chev{
  margin: 0 0 2px;
}

.rows{
  display: flex;
  flex-direction: column;
}

.rows > button{
  height: 24px;
}

.rows.tight > button{
  height: 23px;
}

.line{
  display: flex;
  align-items: center;
  gap: 3px;
  white-space: nowrap;
}

.tool{
  display: flex;
  align-items: center;
  justify-content: center;
  width: 22px;
  height: 24px;
}

.drop{
  width: 37px;
  gap: 5px;
}

.rows .tool:not(.drop){
  justify-content: flex-start;
  padding-left: 2px;
}

.rows .drop{
  justify-content: flex-start;
}

.clipboard .rows{
  margin-left: -5px;
}

.slides .rows{
  margin-left: -5px;
}

.stack{
  display: flex;
  flex-direction: column;
  gap: 8px;
  padding: 7px 0 0 8px;
}

.toolrow{
  display: flex;
  align-items: center;
}

.font b,
.font s,
.font u,
.case{
  font-size: 13px;
}

.font .case{
  gap: 3px;
}

.font .serif{
  font-family: "Liberation Serif", serif;
  font-size: 15px;
}

.shadow b{
  text-shadow: 1px 1px 1px #b3b0ad;
}

.sep{
  width: 1px;
  height: 20px;
  margin: 0 3px;
  background: #d2d0ce;
}

.combos{
  display: flex;
  width: 190px;
}

.combo{
  display: flex;
  align-items: center;
  position: relative;
  width: 46px;
  height: 23px;
  border: 1px solid #c8c6c4;
  background: #e1dfdd;
}

.combo.wide{
  width: 145px;
  margin-right: -1px;
}

.combo select{
  appearance: none;
  width: 100%;
  height: 100%;
}

.combo .chev{
  position: absolute;
  right: 3px;
}

.paragraph .rows{
  margin-left: auto;
  padding-right: 3px;
}

.launch{
  position: absolute;
  right: 3px;
  bottom: 0;
  height: 9px;
  line-height: 0;
  color: #444;
}

.dim{
  color: #a19f9d;
}

.gallery{
  display: flex;
  margin: 2px 0 0 9px;
  width: 137px;
  height: 62px;
  border: 1px solid #c8c6c4;
  background: #fff;
}

.shapes{
  display: grid;
  grid-template-columns: repeat(6, 20px);
  grid-auto-rows: 20px;
  flex: 1;
}

.shapes button{
  display: flex;
  align-items: center;
  justify-content: center;
}

.scroller{
  display: flex;
  flex-direction: column;
  width: 15px;
}

.scroller button{
  flex: 1;
  display: flex;
  align-items: center;
  justify-content: center;
  border: 1px solid #b3b0ad;
  background: #f3f2f1;
}

.scroller .dim{
  border-color: #d2d0ce;
}

.arrange{
  width: 52px;
}

.quickstyles{
  width: 40px;
}

.quickstyles + .rows{
  margin-left: 7px;
}

.editing .rows{
  flex: 1;
  padding-left: 11px;
}

.replace .chev{
  margin-left: 5px;
}

.collapse{
  position: absolute;
  right: 9px;
  bottom: 3px;
  height: 8px;
  line-height: 0;
}

/* work area */
.work{
  flex: 1;
  min-height: 0;
  display: flex;
  position: relative;
  border-bottom: 1px solid #c8c6c4;
  box-shadow: inset 0 4px 3px -2px #c8c6c4;
}

.thumbs{
  width: 201px;
  padding: 20px 20px 0 12px;
  overflow: hidden;
  list-style: none;
}

.thumbs > li{
  display: flex;
  gap: 14px;
  height: 130px;
}

.num{
  width: 9px;
  margin-top: -5px;
  font-size: 15px;
  line-height: 18px;
}

.selected .num{
  color: #d24726;
}

.thumb{
  width: 146px;
  height: 110px;
  padding: 11px;
  border: 1px solid #c8c6c4;
  background: #fff;
  font-family: Lato, "Noto Sans", sans-serif;
}

.selected .thumb{
  border-color: #e6e6e6;
  outline: 3px solid #b7472a;
}

.thumb h3{
  font-size: 6px;
  font-weight: 400;
  line-height: 10px;
}

.thumb p{
  font-size: 3px;
  line-height: 4px;
}

.cover{
  text-align: center;
  padding: 36px 11px 0;
}

.thumb.cover h3{
  font-size: 9px;
  line-height: 12px;
  color: #000;
  margin-bottom: 20px;
}

.cover p{
  white-space: nowrap;
}

.objective{
  padding-top: 16px;
}

.thumb.objective h3{
  width: 44px;
  font-size: 5px;
  line-height: 5px;
}

.thumb.objective p{
  width: 44px;
  margin-top: 2px;
  font-size: 2px;
  line-height: 2px;
}

.compare h3{
  text-align: center;
}

.cols{
  display: grid;
  grid-template-columns: 63px 60px;
  margin-top: 13px;
  font-size: 3px;
  line-height: 5px;
  white-space: nowrap;
  color: #000;
}

.cols h4{
  font-size: 4px;
  text-align: center;
}

.cols ul{
  list-style: none;
}

.cols li::before{
  content: "• ";
}

.scrollbar{
  flex: none;
  display: flex;
  flex-direction: column;
  width: 15px;
  background: #dadada;
}

.scrollbar button{
  display: flex;
  align-items: center;
  justify-content: center;
  height: 15px;
  border: 1px solid #ababab;
  background: #fff;
}

.scrollbar .page{
  height: 17px;
  border: none;
  background: #e6e6e6;
}

.track{
  flex: 1;
}

.handle{
  border: 1px solid #ababab;
  background: #fff;
}

.side{
  margin: 3px 4px 2px 0;
}

.side .handle{
  height: 260px;
}

.main{
  margin: 3px 1px 24px 0;
}

.main .handle{
  height: 57px;
}

.canvas{
  flex: 1;
  display: flex;
  justify-content: center;
  padding: 11px 0 12px;
  border-left: 1px solid #c0c0c0;
  border-bottom: 1px solid #c0c0c0;
  margin-bottom: 2px;
}

.slide{
  aspect-ratio: 692 / 520;
  display: flex;
  flex-direction: column;
  align-items: center;
  border: 1px solid #c8c6c4;
  background: #fff;
}

.slide h1{
  margin-top: 170px;
  color: #000;
  font-family: "Open Sans", "Noto Sans", sans-serif;
  font-size: 42px;
  font-weight: 300;
  line-height: 60px;
  white-space: nowrap;
}

.slide p{
  margin-top: 99px;
  color: #7f7f7f;
  font-family: Lato, "Noto Sans", sans-serif;
  font-size: 13px;
  font-weight: 500;
  line-height: 20px;
}

.watermark{
  position: absolute;
  right: 57px;
  bottom: 10px;
  display: flex;
  align-items: center;
  gap: 6px;
  color: #b4b4b4;
}

.watermark-text{
  padding-top: 6px;
}

.watermark strong{
  display: block;
  font-size: 19px;
  font-weight: 400;
  line-height: 24px;
}

.watermark span{
  font-size: 14px;
  line-height: 22px;
}

/* status bar */
.status{
  flex: none;
  height: 21px;
  display: flex;
  align-items: center;
  padding: 0 5px 1px 8px;
  background: #f3f2f1;
  font-size: 11px;
}

.status button{
  display: flex;
  align-items: center;
  justify-content: center;
  height: 20px;
}

.spell{
  margin: 0 17px 0 19px;
}

.notes{
  gap: 2px;
  margin-left: auto;
  margin-right: 19px;
}

.views{
  display: flex;
  margin-right: 3px;
}

.views button{
  width: 40px;
}

.views .active{
  background: #c8c6c4;
}

.zoom{
  width: 14px;
}

.slider{
  appearance: none;
  width: 100px;
  height: 15px;
  margin: 0 2px;
  background:
    linear-gradient(#a19f9d, #a19f9d) center / 100% 1px no-repeat,
    linear-gradient(#a19f9d, #a19f9d) center / 1px 5px no-repeat;
}

.slider::-webkit-slider-thumb{
  appearance: none;
  width: 5px;
  height: 11px;
  background: #666;
}

.percent{
  width: 24px;
  margin: 0 9px 0 10px;
}

/* taskbar */
.taskbar{
  flex: none;
  height: 40px;
  display: flex;
  align-items: center;
  gap: 4px;
  padding-left: 17px;
  border-top: 1px solid #7b4a62;
  background: linear-gradient(90deg, #82536f 0, #8c5a75 20%, #8f5470 36%, #92536c 40%, #9f617c 54%, #9c5f7a 68%, #965a74 80%, #9e6079 100%);
  color: #fff;
}

.app{
  display: flex;
  align-items: center;
  justify-content: center;
  position: relative;
  width: 58px;
  height: 38px;
}

.open{
  border: 1px solid #b798a8;
  background: rgba(255, 255, 255, 0.18);
}

.stacked{
  padding-right: 4px;
}

.stacked::after{
  content: "";
  position: absolute;
  top: 0;
  right: 3px;
  width: 2px;
  height: 100%;
  background: #b798a8;
}

.current{
  border: 1px solid #fff;
  background: rgba(255, 255, 255, 0.4);
}

.office span{
  position: absolute;
  top: 10px;
  left: 13px;
  width: 17px;
  height: 17px;
  border-radius: 1px;
  font-size: 13px;
  font-weight: 700;
  line-height: 17px;
  color: #fff;
  box-shadow: 1px 1px 2px rgba(0, 0, 0, 0.4);
}

.excel span{ background: #107c41; }
.onenote span{ background: #7719aa; }
.outlook span{ background: #0078d4; }
.ppt span{ background: #c43e1c; }
.word span{ background: #185abd; }

.tray{
  margin-left: auto;
  padding-right: 20px;
  display: flex;
  align-items: center;
  gap: 7px;
}

.keyboard{
  margin-right: 9px;
}

.keyboard + svg{
  margin-right: 4px;
}

.kb{
  margin: 0 6px;
}

time{
  font-size: 11px;
  text-align: center;
  line-height: 17px;
}
```
